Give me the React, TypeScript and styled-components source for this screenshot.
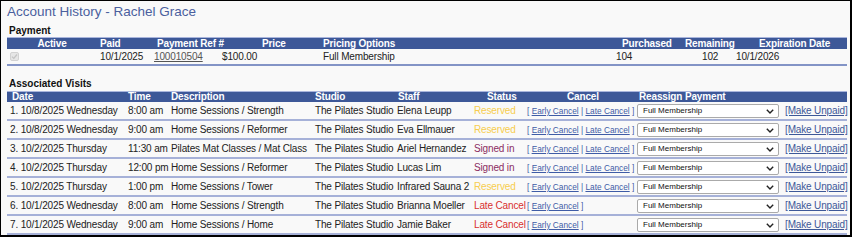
import React from "react"
import styled, { createGlobalStyle } from "styled-components"

const PAY_COLS = "90px 55px 68px 100px 292px 68px 55px 112px"
const VISIT_COLS = "119px 43px 144px 83px 76px 54px 109px 147px 65px"

type Status = "Reserved" | "Signed in" | "Late Cancel"

type Visit = {
  date: string
  time: string
  desc: string
  staff: string
  status: Status
}

const visits: Visit[] = [
  { date: "1. 10/8/2025 Wednesday", time: "8:00 am", desc: "Home Sessions / Strength", staff: "Elena Leupp", status: "Reserved" },
  { date: "2. 10/8/2025 Wednesday", time: "9:00 am", desc: "Home Sessions / Reformer", staff: "Eva Ellmauer", status: "Reserved" },
  { date: "3. 10/2/2025 Thursday", time: "11:30 am", desc: "Pilates Mat Classes / Mat Class", staff: "Ariel Hernandez", status: "Signed in" },
  { date: "4. 10/2/2025 Thursday", time: "12:00 pm", desc: "Home Sessions / Reformer", staff: "Lucas Lim", status: "Signed in" },
  { date: "5. 10/2/2025 Thursday", time: "1:00 pm", desc: "Home Sessions / Tower", staff: "Infrared Sauna 2", status: "Reserved" },
  { date: "6. 10/1/2025 Wednesday", time: "8:00 am", desc: "Home Sessions / Strength", staff: "Brianna Moeller", status: "Late Cancel" },
  { date: "7. 10/1/2025 Wednesday", time: "9:00 am", desc: "Home Sessions / Home", staff: "Jamie Baker", status: "Late Cancel" },
]

const statusColor: Record<Status, string> = {
  Reserved: "#f7cd4f",
  "Signed in": "#8b2d62",
  "Late Cancel": "#d8302f",
}

const App = () => {
  return (
    <Page>
      <GlobalStyle />
      <Title>Account History - Rachel Grace</Title>

      <SectionLabel>Payment</SectionLabel>
      <HeadRow $cols={PAY_COLS} $h={12}>
        <Cell $center>Active</Cell>
        <Cell $pad={3}>Paid</Cell>
        <Cell $pad={5}>Payment Ref #</Cell>
        <Cell $pad={42}>Price</Cell>
        <Cell $pad={3}>Pricing Options</Cell>
        <Cell $pad={10}>Purchased</Cell>
        <Cell $pad={5}>Remaining</Cell>
        <Cell $pad={24}>Expiration Date</Cell>
      </HeadRow>
      <PayRow $cols={PAY_COLS}>
        <Cell $pad={3}>
          <Check role="checkbox" aria-checked="true" aria-disabled="true">
            <svg width="7" height="7" viewBox="0 0 7 7">
              <polyline points="1,3.6 2.8,5.4 6,1.5" fill="none" stroke="#c4c4c4" strokeWidth="1.3" />
            </svg>
          </Check>
        </Cell>
        <Cell $pad={3}>10/1/2025</Cell>
        <Cell $pad={2}>
          <RefLink href="#">100010504</RefLink>
        </Cell>
        <Cell $pad={2}>$100.00</Cell>
        <Cell $pad={3}>Full Membership</Cell>
        <Cell $pad={4}>104</Cell>
        <Cell $pad={22}>102</Cell>
        <Cell $pad={1}>10/1/2026</Cell>
      </PayRow>

      <SectionLabel $top={11}>Associated Visits</SectionLabel>
      <HeadRow $cols={VISIT_COLS} $h={11}>
        <Cell $pad={5}>Date</Cell>
        <Cell $pad={2}>Time</Cell>
        <Cell $pad={2}>Description</Cell>
        <Cell $pad={2}>Studio</Cell>
        <Cell $pad={2}>Staff</Cell>
        <Cell $pad={15}>Status</Cell>
        <Cell $pad={41}>Cancel</Cell>
        <Cell $pad={4}>Reassign Payment</Cell>
        <Cell />
      </HeadRow>
      {visits.map((v) => (
        <VisitRow key={v.date} $cols={VISIT_COLS}>
          <Cell $pad={3}>{v.date}</Cell>
          <Cell $pad={2}>{v.time}</Cell>
          <Cell $pad={2}>{v.desc}</Cell>
          <Cell $pad={2}>The Pilates Studio</Cell>
          <Cell $pad={1}>{v.staff}</Cell>
          <Cell $pad={2} $color={statusColor[v.status]}>{v.status}</Cell>
          <Cell $pad={1}>
            <CancelLinks>
              [ <SmallLink href="#">Early Cancel</SmallLink>
              {v.status !== "Late Cancel" && (
                <>
                  {" | "}
                  <SmallLink href="#">Late Cancel</SmallLink>
                </>
              )}{" "}
              ]
            </CancelLinks>
          </Cell>
          <Cell $pad={2}>
            <SelectWrap>
              <Select defaultValue="full">
                <option value="full">Full Membership</option>
              </Select>
              <Chevron width="8" height="5" viewBox="0 0 8 5">
                <polyline points="0.8,0.8 4,4 7.2,0.8" fill="none" stroke="#222" strokeWidth="1.4" />
              </Chevron>
            </SelectWrap>
          </Cell>
          <Cell $pad={3}>
            <UnpaidLink href="#">[Make Unpaid]</UnpaidLink>
          </Cell>
        </VisitRow>
      ))}
    </Page>
  )
}

export default App

const GlobalStyle = createGlobalStyle`
  body {
    margin: 0;
    background: #ffffff;
    font-family: "Liberation Sans", Arial, sans-serif;
  }
`

const Page = styled.div`
  width: 852px;
  height: 237px;
  box-sizing: border-box;
  border-style: solid;
  border-color: #000;
  border-width: 1px 2px 2px 1px;
  background: #f9f9f9;
  padding: 0 3px 0 6px;
  overflow: hidden;
  color: #222;
  font-family: "Liberation Sans", Arial, sans-serif;
`

const Title = styled.h1`
  margin: 0;
  height: 23px;
  line-height: 21px;
  font-size: 13.5px;
  font-weight: normal;
  color: #4b5f9e;
`

const SectionLabel = styled.div<{ $top?: number }>`
  margin-top: ${(p) => p.$top ?? 0}px;
  height: ${(p) => (p.$top ? 14 : 13)}px;
  line-height: ${(p) => (p.$top ? 14 : 13)}px;
  padding-left: 2px;
  font-size: 10px;
  font-weight: bold;
  color: #111;
`

const Grid = styled.div<{ $cols: string }>`
  display: grid;
  grid-template-columns: ${(p) => p.$cols};
  align-items: center;
  font-size: 10px;
  letter-spacing: -0.15px;
  white-space: nowrap;
`

const HeadRow = styled(Grid)<{ $h: number }>`
  height: ${(p) => p.$h}px;
  box-sizing: border-box;
  background: #3d5898;
  border-top: 1px solid #a9b5dc;
  color: #ffffff;
  font-weight: bold;
  line-height: ${(p) => p.$h - 1}px;
`

const PayRow = styled(Grid)`
  height: 15px;
  border-bottom: 2px solid #8394c6;
`

const VisitRow = styled(Grid)`
  height: 17px;
  border-bottom: 2px solid #a6b1d8;
`

const Cell = styled.div<{ $pad?: number; $center?: boolean; $color?: string }>`
  padding-left: ${(p) => p.$pad ?? 0}px;
  color: ${(p) => p.$color ?? "inherit"};
  display: flex;
  align-items: center;
  justify-content: ${(p) => (p.$center ? "center" : "flex-start")};
  overflow: visible;
  min-width: 0;
`

const Check = styled.span`
  display: inline-flex;
  align-items: center;
  justify-content: center;
  width: 9px;
  height: 9px;
  box-sizing: border-box;
  background: #e6e6e6;
  border: 1px solid #d2d2d2;
  border-radius: 2px;
`

const RefLink = styled.a`
  color: #555;
  text-decoration: underline;
`

const CancelLinks = styled.span`
  font-size: 8.3px;
  letter-spacing: 0;
  color: #3f5ca6;
`

const SmallLink = styled.a`
  color: #3f5ca6;
  text-decoration: underline;
`

const SelectWrap = styled.div`
  position: relative;
  width: 142px;
  height: 14px;
`

const Select = styled.select`
  appearance: none;
  width: 142px;
  height: 14px;
  box-sizing: border-box;
  margin: 0;
  padding: 0 0 0 5px;
  border: 1px solid #aaaaaa;
  border-radius: 2px;
  background: #ffffff;
  color: #111;
  font-family: "Liberation Sans", Arial, sans-serif;
  font-size: 8px;
`

const Chevron = styled.svg`
  position: absolute;
  right: 5px;
  top: 5px;
  pointer-events: none;
`

const UnpaidLink = styled.a`
  color: #3d5898;
  text-decoration: underline;
`
